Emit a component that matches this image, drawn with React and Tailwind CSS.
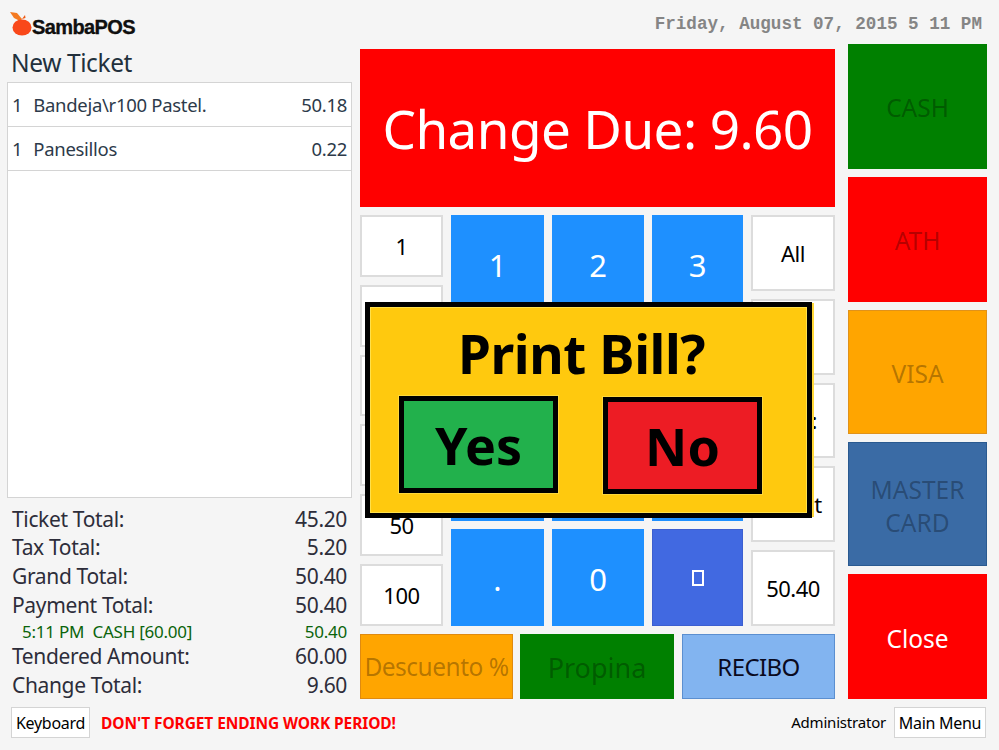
function Btn({ className = "", children }) {
  return (
    <div className={"flex items-center justify-center text-center leading-none " + className}>
      {children}
    </div>
  );
}

const white = "bg-white border-2 border-[#dcdcdc] text-black text-[22px] tracking-[-0.5px]";
const blue = "bg-[#1e90ff] text-white text-[31px] pt-1";

function TotalRow({ label, value }) {
  return (
    <div className="flex justify-between h-[28.7px] items-center text-[21px] text-[#2d2d3a] tracking-[-0.35px]">
      <span>{label}</span>
      <span>{value}</span>
    </div>
  );
}

function Logo() {
  return (
    <div className="flex items-start ml-[10px] mt-[12px] h-[24px]">
      <svg width="23" height="24" viewBox="0 0 23 24">
        <path d="M0 0 L7 1 L12 7 L10 9 L4 6 Z" fill="#f47a20" />
        <path d="M12 7 L15 3 L15.5 6 Z" fill="#f05a14" />
        <ellipse cx="12" cy="15.5" rx="9.5" ry="8" fill="#f9481a" />
      </svg>
      <span className="font-bold text-[20px] leading-[24px] text-[#111] tracking-[-0.6px] -ml-[1px] [font-family:'Liberation_Sans',sans-serif] [-webkit-text-stroke:0.3px_#000] mt-[3px]">
        SambaPOS
      </span>
    </div>
  );
}

function Ticket({ name, value }) {
  return (
    <div className="h-[44px] flex items-center justify-between pl-[4px] pr-[4px] pt-px border-b border-[#d4d4d4]">
      <span className="flex gap-[11px]"><span>1</span><span>{name}</span></span>
      <span>{value}</span>
    </div>
  );
}

export default function App() {
  return (
    <div className="relative w-[999px] h-[750px] bg-[#f5f5f5] flex flex-col overflow-hidden [font-family:'Noto_Sans','Open_Sans',sans-serif]">
      <div className="h-[44px] flex justify-between shrink-0">
        <Logo />
        <div className="mr-[17px] mt-[13px] text-[17.6px] leading-[22px] font-bold text-[#858585] [font-family:'Liberation_Mono',monospace]">
          Friday, August 07, 2015 5 11 PM
        </div>
      </div>

      <div className="flex h-[655px] shrink-0 pl-[7px] pr-[12px]">
        {/* left */}
        <div className="w-[345px] flex flex-col shrink-0">
          <div className="h-[38px] shrink-0 pl-[4px] flex items-center text-[24.5px] text-[#22303c] tracking-[-0.4px]">
            New Ticket
          </div>
          <div className="h-[416px] shrink-0 bg-white border border-[#d4d4d4] text-[18.5px] text-[#2d3a4a] tracking-[-0.3px]">
            <Ticket name="Bandeja\r100 Pastel." value="50.18" />
            <Ticket name="Panesillos" value="0.22" />
          </div>
          <div className="shrink-0 pl-[5px] pr-[5px] pt-[7px]">
            <TotalRow label="Ticket Total:" value="45.20" />
            <TotalRow label="Tax Total:" value="5.20" />
            <TotalRow label="Grand Total:" value="50.40" />
            <TotalRow label="Payment Total:" value="50.40" />
            <div className="flex justify-between h-[23px] items-center text-[17px] text-[#0a640a] tracking-[-0.25px] pl-[10px]">
              <span className="whitespace-pre">5:11 PM  CASH [60.00]</span>
              <span>50.40</span>
            </div>
            <TotalRow label="Tendered Amount:" value="60.00" />
            <TotalRow label="Change Total:" value="9.60" />
          </div>
        </div>

        {/* middle */}
        <div className="w-[475px] ml-[8px] shrink-0 flex flex-col pt-[5px] gap-2">
          <Btn className="h-[158px] bg-[#ff0000] text-white text-[53px] tracking-[-0.6px]">Change Due: 9.60</Btn>
          <div className="h-[411px] flex gap-2">
            <div className="w-[83px] flex flex-col gap-2">
              <Btn className={"h-[62px] " + white}>1</Btn>
              <Btn className={"h-[62px] " + white} />
              <Btn className={"h-[62px] " + white} />
              <Btn className={"h-[62px] " + white} />
              <Btn className={"h-[62px] " + white}>50</Btn>
              <Btn className={"h-[62px] " + white}>100</Btn>
            </div>
            <div className="w-[292px] grid grid-cols-[93px_92px_91px] grid-rows-4 gap-x-2 gap-y-2">
              <Btn className={blue}>1</Btn>
              <Btn className={blue}>2</Btn>
              <Btn className={blue}>3</Btn>
              <Btn className={blue} />
              <Btn className={blue} />
              <Btn className={blue} />
              <Btn className={blue} />
              <Btn className={blue} />
              <Btn className={blue} />
              <Btn className={blue}>.</Btn>
              <Btn className={blue}>0</Btn>
              <Btn className="bg-[#4169e1] border border-[#3c5fd0]">
                <div className="w-[12px] h-[16px] border-2 border-white" />
              </Btn>
            </div>
            <div className="w-[84px] flex flex-col gap-2">
              <Btn className={"flex-1 " + white}>All</Btn>
              <Btn className={"flex-1 " + white} />
              <Btn className={"flex-1 justify-end pr-[16px] " + white}>:</Btn>
              <Btn className={"flex-1 pl-[5px] " + white}>Exact</Btn>
              <Btn className={"flex-1 " + white}>50.40</Btn>
            </div>
          </div>
          <div className="h-[65px] flex">
            <Btn className="w-[153px] pt-[2px] bg-[#ffa500] border border-[#df8a10] text-black/30 text-[24.5px] tracking-[-0.5px] whitespace-nowrap">Descuento %</Btn>
            <Btn className="w-[154px] pt-[2px] ml-[7px] bg-[#008000] text-black/30 text-[27px]">Propina</Btn>
            <Btn className="w-[153px] ml-[8px] bg-[#82b4f0] border border-[#5b8fd0] text-[#0a0a1e] text-[24px] tracking-[-0.6px]">RECIBO</Btn>
          </div>
        </div>

        {/* right */}
        <div className="w-[139px] ml-[13px] shrink-0 flex flex-col gap-2 text-[24.5px]">
          <Btn className="h-[125px] pt-[4px] bg-[#008000] text-black/30">CASH</Btn>
          <Btn className="h-[125px] pt-[4px] bg-[#ff0000] text-black/30">ATH</Btn>
          <Btn className="h-[124px] pt-[4px] bg-[#ffa500] border border-[#e0921a] text-black/30">VISA</Btn>
          <Btn className="h-[124px] pt-[4px] bg-[#3a6ba5] border border-[#2a5a90] text-black/30">
            <span className="leading-[33px]">MASTER<br />CARD</span>
          </Btn>
          <Btn className="h-[125px] pt-[5px] bg-[#ff0000] text-white">Close</Btn>
        </div>
      </div>

      {/* footer */}
      <div className="flex items-center justify-between pl-[11px] pr-[13px] pt-[8px]">
        <div className="flex items-center">
          <Btn className="w-[79px] h-[31px] bg-white border border-[#d4d4d4] text-[16px] text-black tracking-[-0.3px]">Keyboard</Btn>
          <span className="ml-[11px] mt-[3px] text-[15.5px] font-bold text-[#ff0000] tracking-[-0.1px]">DON'T FORGET ENDING WORK PERIOD!</span>
        </div>
        <div className="flex items-center">
          <span className="text-[15px] text-black tracking-[-0.2px]">Administrator</span>
          <Btn className="ml-[8px] w-[92px] h-[31px] bg-white border border-[#d4d4d4] text-[16px] text-black tracking-[-0.3px]">Main Menu</Btn>
        </div>
      </div>

      {/* dialog overlay */}
      <div className="absolute left-[812px] top-[303px] w-[2px] h-[214px] bg-[#ffd83a]" />
      <div className="absolute left-[365px] top-[302px] w-[447px] h-[216px] bg-[#ffc90e] border-[5px] border-black shadow-[inset_0_0_0_1px_#ffe04a] flex flex-col">
        <div className="mt-[13px] pl-[88px] text-[53px] leading-[68px] font-bold text-black tracking-[-0.4px]">Print Bill?</div>
        <div className="mt-[8px] w-full flex items-start justify-between pl-[29px] pr-[45px]">
          <div className="w-[159px] h-[97px] bg-[#22b14c] border-[5px] border-black shadow-[0_0_0_1px_#ffd83a] flex items-center justify-center text-[52px] font-bold text-black leading-none">Yes</div>
          <div className="w-[159px] h-[97px] mt-px bg-[#ed1c24] border-[5px] border-black shadow-[0_0_0_1px_#ffd83a] flex items-center justify-center text-[52px] font-bold text-black leading-none">No</div>
        </div>
      </div>
    </div>
  );
}
